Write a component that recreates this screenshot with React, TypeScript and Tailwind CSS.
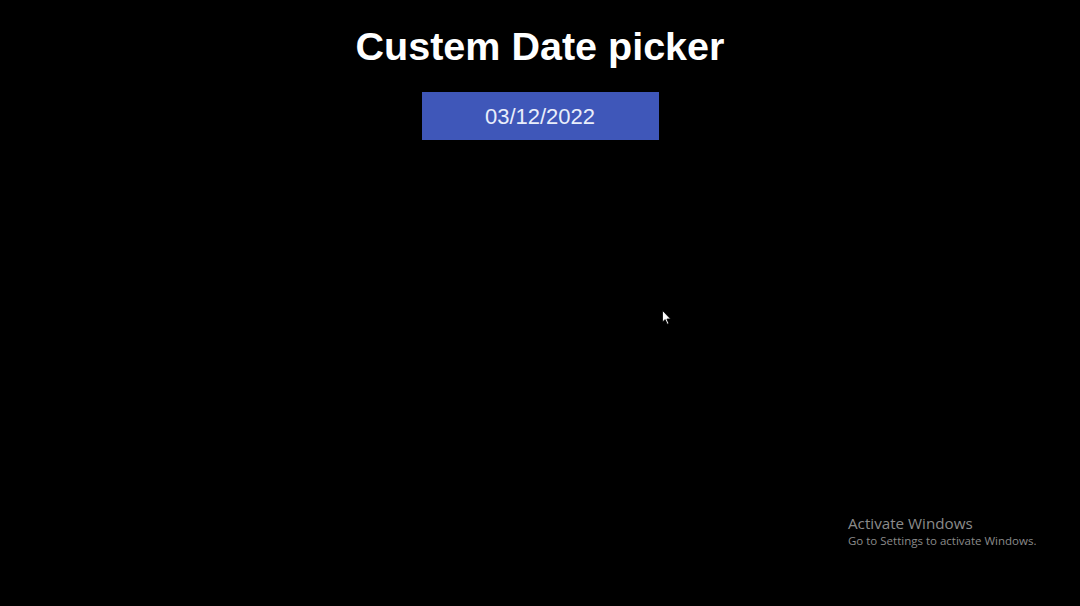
export default function App() {
  return (
    <div className="relative w-full h-[606px] bg-black overflow-hidden font-['Liberation_Sans',Arial,sans-serif]">
      <div className="flex flex-col items-center pt-[23px]">
        <h1 className="text-[39.5px] leading-[46px] font-bold text-white">Custem Date picker</h1>
        <div className="mt-[23px] w-[237px] h-[48px] bg-[#3f57b9] flex items-center justify-center text-[22px] text-[#e9eefb]">
          03/12/2022
        </div>
      </div>

      {/* mouse pointer */}
      <svg className="absolute left-[662px] top-[310px]" width="10" height="16" viewBox="0 0 10 16">
        <path d="M0.5 0.5 L0.5 12 L3.2 9.6 L5.2 14.2 L6.8 13.5 L4.9 9 L8.6 9 Z" fill="#fff" stroke="#000" strokeWidth="0.8" />
      </svg>

      <div className="absolute left-[848px] top-[513px] font-['Open_Sans',sans-serif] text-[#8b8b8b]">
        <div className="text-[15.2px] leading-[20px]">Activate Windows</div>
        <div className="text-[11.5px] leading-[16px]">Go to Settings to activate Windows.</div>
      </div>
    </div>
  );
}
